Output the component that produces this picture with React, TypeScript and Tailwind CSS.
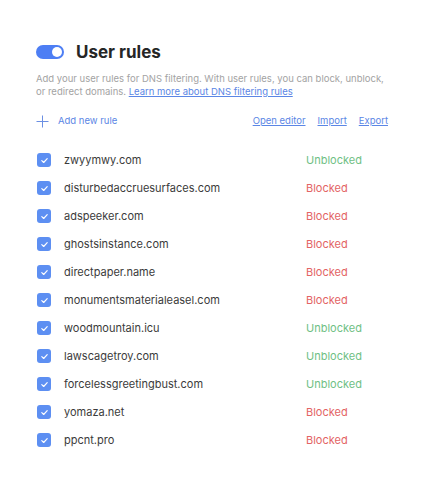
import React from 'react';

const RULES: { domain: string; blocked: boolean }[] = [
    { domain: 'zwyymwy.com', blocked: false },
    { domain: 'disturbedaccruesurfaces.com', blocked: true },
    { domain: 'adspeeker.com', blocked: true },
    { domain: 'ghostsinstance.com', blocked: true },
    { domain: 'directpaper.name', blocked: true },
    { domain: 'monumentsmaterialeasel.com', blocked: true },
    { domain: 'woodmountain.icu', blocked: false },
    { domain: 'lawscagetroy.com', blocked: false },
    { domain: 'forcelessgreetingbust.com', blocked: false },
    { domain: 'yomaza.net', blocked: true },
    { domain: 'ppcnt.pro', blocked: true },
];

const Checkbox = () => (
    <span className="flex h-[14px] w-[14px] items-center justify-center rounded-[3px] bg-[#5d8ff2]">
        <svg width="9" height="9" viewBox="0 0 10 10" fill="none">
            <path d="M2 5.2 4.1 7.2 8 3" stroke="white" strokeWidth="1.3" strokeLinecap="round" strokeLinejoin="round" />
        </svg>
    </span>
);

export default function App() {
    return (
        <div className="min-h-screen bg-white font-['Inter',sans-serif]">
            <div className="pl-[36px] pr-[42px] pt-[40px]">
                <div className="flex items-center gap-[12px]">
                    <span className="relative flex h-[14px] w-[28px] items-center rounded-full bg-[#4d7ef4]">
                        <span className="absolute right-[2px] h-[10px] w-[10px] rounded-full bg-white" />
                    </span>
                    <h1 className="text-[17px] font-bold leading-[24px] text-[#262626]">User rules</h1>
                </div>

                <p className="mt-[8px] text-[9.5px] leading-[13px] text-[#a3a3a3]">
                    Add your user rules for DNS filtering. With user rules, you can block, unblock,
                    <br />
                    or redirect domains.{' '}
                    <a className="text-[#5b86e5] underline underline-offset-1">Learn more about DNS filtering rules</a>
                </p>

                <div className="mt-[16px] flex items-center justify-between text-[9.5px] text-[#5b86e5]">
                    <div className="flex items-center gap-[9px]">
                        <svg width="13" height="13" viewBox="0 0 13 13" fill="none">
                            <path d="M6.5 0.5v12M0.5 6.5h12" stroke="#6b8fe3" strokeWidth="1" />
                        </svg>
                        <span>Add new rule</span>
                    </div>
                    <div className="flex items-center gap-[12px] underline underline-offset-1">
                        <span>Open editor</span>
                        <span>Import</span>
                        <span>Export</span>
                    </div>
                </div>

                <ul className="mt-[18px]">
                    {RULES.map((r) => (
                        <li key={r.domain} className="flex h-[28px] items-center">
                            <span className="w-[28px] pl-[1px]">
                                <Checkbox />
                            </span>
                            <span className="w-[242px] text-[11px] text-[#3b3b3b]">{r.domain}</span>
                            <span className={r.blocked ? 'text-[11px] text-[#e36464]' : 'text-[11px] text-[#6fbf85]'}>
                                {r.blocked ? 'Blocked' : 'Unblocked'}
                            </span>
                        </li>
                    ))}
                </ul>
            </div>
        </div>
    );
}
